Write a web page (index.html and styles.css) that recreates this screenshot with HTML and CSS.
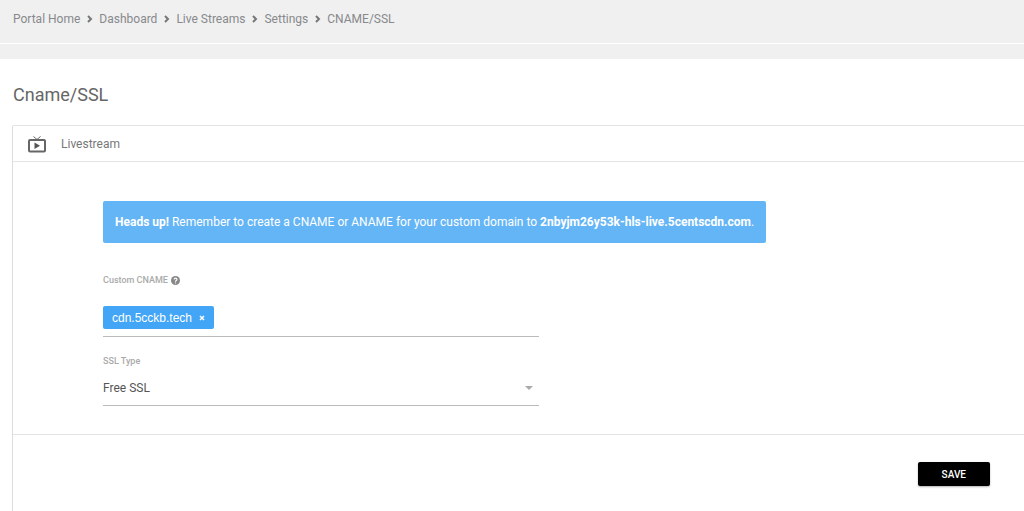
FILE: index.html
```html
<!DOCTYPE html>
<html lang="en">
<head>
<meta charset="UTF-8">
<meta name="viewport" content="width=device-width, initial-scale=1.0">
<title>Cname/SSL</title>
<link rel="stylesheet" href="styles.css">
</head>
<body>
  <header class="topbar">
    <nav class="breadcrumb" aria-label="Breadcrumb">
      <a href="#">Portal Home</a>
      <svg class="chevron" viewBox="0 0 7 8"><path d="M2 1l3 3-3 3"/></svg>
      <a href="#">Dashboard</a>
      <svg class="chevron" viewBox="0 0 7 8"><path d="M2 1l3 3-3 3"/></svg>
      <a href="#">Live Streams</a>
      <svg class="chevron" viewBox="0 0 7 8"><path d="M2 1l3 3-3 3"/></svg>
      <a href="#">Settings</a>
      <svg class="chevron" viewBox="0 0 7 8"><path d="M2 1l3 3-3 3"/></svg>
      <a href="#">CNAME/SSL</a>
    </nav>
  </header>

  <main class="content">
    <h1>Cname/SSL</h1>

    <form class="card">
      <div class="card-header">
        <svg class="tv-icon" viewBox="0 0 18 17">
          <path class="antenna" d="M5.5 .5L9 3.5 12.5 .5"/>
          <rect x="1" y="4" width="16" height="11.5" rx="1"/>
          <path class="play" d="M6.5 6.5v6.5l5.5-3.25z"/>
        </svg>
        <h2>Livestream</h2>
      </div>

      <div class="card-body">
        <div class="alert">
          <strong>Heads up!</strong> Remember to create a CNAME or ANAME for your custom domain to <strong>2nbyjm26y53k-hls-live.5centscdn.com</strong>.
        </div>

        <div class="field">
          <div class="field-label">
            <label for="cname">Custom CNAME</label>
            <svg class="help-icon" viewBox="0 0 8 8">
              <circle cx="4" cy="4" r="4"/>
              <path d="M2.8 3.1c0-1.6 2.5-1.6 2.5 0C5.3 4 4 4 4 5M4 5.7v.9"/>
            </svg>
          </div>
          <div class="tags-input">
            <span class="tag">cdn.5cckb.tech
              <button type="button" class="tag-remove" aria-label="Remove">
                <svg viewBox="0 0 6 6"><path d="M1 1l4 4M5 1L1 5"/></svg>
              </button>
            </span>
            <input type="text" id="cname">
          </div>
        </div>

        <div class="field">
          <div class="field-label">
            <label for="sslType">SSL Type</label>
          </div>
          <select id="sslType">
            <option>Free SSL</option>
          </select>
        </div>
      </div>

      <div class="card-footer">
        <button type="button" class="save-button">SAVE</button>
      </div>
    </form>
  </main>
</body>
</html>
```
FILE: styles.css
```css
* {
  box-sizing: border-box;
  margin: 0;
  padding: 0;
}

body {
  font-family: Roboto, Arial, sans-serif;
  font-size: 12px;
  line-height: 18px;
  color: #666;
  background-color: #fff;
  display: flex;
  flex-direction: column;
  min-height: 100vh;
}

.topbar {
  background-color: #f0f0f0;
  padding-bottom: 15px;
}

.breadcrumb {
  display: flex;
  flex-wrap: wrap;
  align-items: center;
  gap: 6px;
  padding: 10px 13px 15px;
  border-bottom: 1px solid #fff;
}

.breadcrumb a {
  color: #87898c;
  text-decoration: none;
}

.chevron {
  width: 7px;
  height: 8px;
  fill: none;
  stroke: #777;
  stroke-width: 2;
}

.content {
  flex: 1;
  display: flex;
  flex-direction: column;
  padding: 23px 0 0 12px;
}

h1 {
  font-size: 18px;
  font-weight: 400;
  line-height: 26px;
  padding-left: 1px;
  margin-bottom: 17px;
}

.card {
  flex: 1;
  border-top: 1px solid #e4e4e4;
  border-left: 1px solid #ddd;
  border-top-left-radius: 2px;
}

.card-header {
  display: flex;
  align-items: center;
  gap: 15px;
  padding: 9px 15px 8px;
  border-bottom: 1px solid #e4e4e4;
}

.tv-icon {
  width: 18px;
  height: 17px;
  fill: none;
  stroke: #666;
  stroke-width: 2;
}

.tv-icon .antenna {
  stroke-width: 1;
}

.tv-icon .play {
  fill: #555;
  stroke: none;
}

h2 {
  font-size: 12px;
  font-weight: 400;
  line-height: 18px;
  color: #777;
}

.card-body {
  padding: 39px 90px 28px;
}

.alert {
  width: fit-content;
  padding: 12px;
  margin-bottom: 28px;
  color: #fff;
  background-color: #64b5f6;
  border-radius: 2px;
}

.alert strong {
  font-weight: 700;
}

.field {
  max-width: 436px;
  margin-bottom: 15px;
}

.field:last-child {
  margin-bottom: 0;
}

.field-label {
  display: flex;
  align-items: center;
  gap: 3px;
  font-size: 9px;
  font-weight: 500;
  color: #aaa;
}

.help-icon {
  width: 9px;
  height: 9px;
  fill: #888;
}

.help-icon path {
  fill: none;
  stroke: #fff;
  stroke-width: 1;
}

.tags-input {
  display: flex;
  align-items: center;
  padding: 17px 0 7px;
  border-bottom: 1px solid #bbb;
}

.tags-input input {
  flex: 1;
  min-width: 0;
  height: 23px;
  border: none;
  outline: none;
}

.tag {
  display: flex;
  align-items: center;
  gap: 7px;
  height: 23px;
  padding: 0 9px;
  font-family: "Liberation Sans", Arial, sans-serif;
  color: #fff;
  background-color: #42a5f5;
  border-radius: 2px;
}

.tag-remove {
  display: flex;
  border: none;
  background: none;
  cursor: pointer;
}

.tag-remove svg {
  width: 6px;
  height: 6px;
  stroke: #fff;
  stroke-width: 1.5;
}

select {
  display: block;
  width: 100%;
  height: 36px;
  font-family: inherit;
  font-size: 12px;
  color: #555;
  appearance: none;
  border: none;
  border-bottom: 1px solid #bbb;
  border-radius: 0;
  background: url("data:image/svg+xml,%3Csvg xmlns='http://www.w3.org/2000/svg' viewBox='0 0 8 4'%3E%3Cpath d='M0 0h8L4 4z' fill='%23aaa'/%3E%3C/svg%3E") no-repeat right 6px center / 8px 4px;
}

.card-footer {
  display: flex;
  justify-content: flex-end;
  padding: 27px 34px;
  border-top: 1px solid #e4e4e4;
}

.save-button {
  height: 24px;
  padding: 0 24px;
  font-family: inherit;
  font-size: 10px;
  font-weight: 500;
  color: #fff;
  background-color: #000;
  border: none;
  border-radius: 2px;
  box-shadow: 0 1px 2px rgba(0, 0, 0, 0.3);
  cursor: pointer;
}
```
